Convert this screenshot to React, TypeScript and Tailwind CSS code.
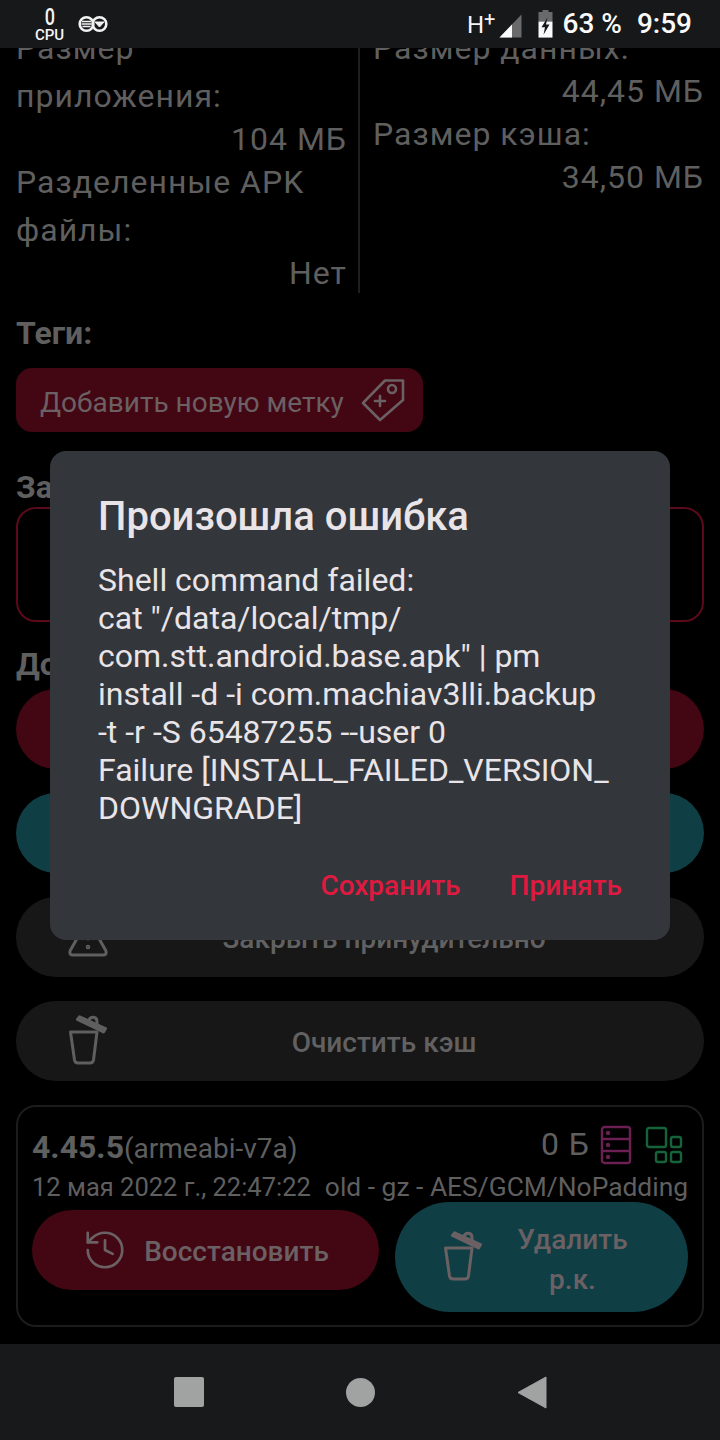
import React from 'react'
import { History } from 'lucide-react'

function TrashIcon({ color }: { color: string }) {
  return (
    <svg width="44" height="52" viewBox="0 0 44 52" fill="none" stroke={color} strokeWidth="3" strokeLinecap="round" strokeLinejoin="round">
      <path d="M4.5 17 L31 17 L27.5 45 Q27 48 24 48 L12 48 Q9 48 8.5 45 Z" />
      <path d="M11.5 4.5 L37.5 17 L39.5 13.5 L13.5 1.8 Z" fill={color} />
      <path d="M22.5 6 Q24 1.5 28.5 2.5 Q31.5 3.5 31 8.5" />
    </svg>
  )
}

function WarnIcon() {
  return (
    <svg width="42" height="42" viewBox="0 0 42 42" fill="none" stroke="#5f5f5f" strokeWidth="3" strokeLinecap="round" strokeLinejoin="round">
      <path d="M21 3 L39 35 Q40 39 36 39 L6 39 Q2 39 3 35 Z" />
      <circle cx="21" cy="31" r="0.8" fill="#5f5f5f" />
      <path d="M21 14 V23" />
    </svg>
  )
}

function OwlIcon() {
  return (
    <svg width="30" height="20" viewBox="0 0 30 20" fill="none" stroke="#f2f2f2">
      <circle cx="8.5" cy="10" r="6.8" strokeWidth="2.6" />
      <circle cx="21.5" cy="10" r="6.8" strokeWidth="2.6" />
      <path d="M4 7.5 H13 M3.5 10 H13.5 M4.5 12.5 H12.5" strokeWidth="1.3" />
      <path d="M17 8 H26 L21.5 13 Z" fill="#f2f2f2" strokeWidth="1" />
    </svg>
  )
}

function StatusIcons() {
  return (
    <div className="flex items-center">
      <span className="text-[24px] leading-none font-normal text-[#f5f5f5] mt-[1px]">H</span>
      <span className="text-[20px] leading-none font-normal text-[#f5f5f5] mb-[10px]">+</span>
      <svg className="ml-[4px] mt-[3px]" width="23" height="24" viewBox="0 0 23 24">
        <path d="M0.5 23.5 L22.5 0.5 V23.5 Z" fill="#6a6a6a" />
        <path d="M0.5 23.5 L13 10.5 V23.5 Z" fill="#fafafa" />
      </svg>
      <svg className="ml-[16px]" width="15" height="28" viewBox="0 0 15 34" preserveAspectRatio="none">
        <path d="M4.5 0 H10.5 V2.5 H14.5 V14 H0.5 V2.5 H4.5 Z" fill="#6a6a6a" />
        <path d="M0.5 14 H14.5 V33.5 H0.5 Z" fill="#fafafa" />
        <path d="M9.5 9 L3.5 21 H7 L5.5 30 L11.5 17.5 H8 Z" fill="#17181a" />
      </svg>
    </div>
  )
}

function ListLine({ children, right }: { children: React.ReactNode; right?: boolean }) {
  return <div className={`-mt-[5px] leading-[48px] ${right ? 'text-right' : ''}`}>{children}</div>
}

function PillButton({ bg, label, icon }: { bg: string; label?: string; icon?: React.ReactNode }) {
  return (
    <div className={`h-[80px] rounded-[40px] flex items-center pl-[50px] pr-[46px] ${bg}`}>
      <div className="w-[44px] flex justify-center">{icon}</div>
      <div className="flex-1 text-center text-[28px] font-medium text-[#616161] mt-[4px]">{label}</div>
    </div>
  )
}

export default function App() {
  return (
    <div className="relative w-[720px] h-[1440px] overflow-hidden flex flex-col bg-black font-['Roboto',sans-serif]">
      {/* status bar */}
      <div className="h-[48px] shrink-0 bg-[#17181a] flex items-center justify-between pl-[35px] pr-[28px] z-10">
        <div className="flex items-center">
          <div className="flex flex-col items-center text-[#f5f5f5]">
            <span className="text-[24px] leading-[22px] font-medium scale-x-75">0</span>
            <span className="text-[15px] leading-[14px] font-medium">CPU</span>
          </div>
          <div className="ml-[14px]">
            <OwlIcon />
          </div>
        </div>
        <div className="flex items-center">
          <StatusIcons />
          <span className="ml-[9px] text-[28px] font-medium text-[#fafafa]">63 %</span>
          <span className="ml-[15px] text-[28px] font-medium text-[#fafafa]">9:59</span>
        </div>
      </div>

      {/* page behind the dialog */}
      <div className="flex-1 overflow-hidden px-[16px]">
        <div className="-mt-[19px] flex text-[32px] tracking-[1px] text-[#5f5f5f]">
          <div className="w-[344px] pr-[11px] border-r-2 border-[#1f1f1f] h-[264px]">
            <ListLine>Размер</ListLine>
            <div className="-mt-[5px] leading-[48px] pt-[5px]">приложения:</div>
            <ListLine right>104 МБ</ListLine>
            <ListLine>Разделенные APK</ListLine>
            <div className="-mt-[5px] leading-[48px] pt-[5px]">файлы:</div>
            <ListLine right>Нет</ListLine>
          </div>
          <div className="flex-1 pl-[13px]">
            <ListLine>Размер данных:</ListLine>
            <ListLine right>44,45 МБ</ListLine>
            <ListLine>Размер кэша:</ListLine>
            <ListLine right>34,50 МБ</ListLine>
          </div>
        </div>

        <div className="mt-[20px] text-[32px] leading-[40px] font-bold text-[#5f5f5f]">Теги:</div>
        <div className="mt-[15px] w-[407px] h-[64px] rounded-[16px] bg-[#430713] flex items-center justify-between pl-[24px] pr-[17px]">
          <span className="text-[28px] text-[#6b6063] mt-[5px]">Добавить новую метку</span>
          <svg width="46" height="44" viewBox="0 0 46 44" fill="none" stroke="#6b6063" strokeWidth="2.6" strokeLinecap="round" strokeLinejoin="round">
            <path d="M3 25 L25 2.5 H43 L43 22 L20 42 Z" />
            <circle cx="32" cy="11" r="4" />
            <path d="M20 18 V28 M15 23 H25" />
          </svg>
        </div>

        <div className="mt-[35px] text-[32px] leading-[40px] font-bold text-[#5f5f5f]">Заметка:</div>
        <div className="h-[115px] rounded-[20px] border-2 border-[#5c0a1b]"></div>

        <div className="mt-[22px] text-[32px] leading-[40px] font-bold text-[#5f5f5f]">Дополнительно:</div>
        <div className="flex flex-col gap-[24px] mt-[5px]">
          <PillButton bg="bg-[#430713]" />
          <PillButton bg="bg-[#0f3e45]" />
          <PillButton bg="bg-[#181718]" label="Закрыть принудительно" icon={<WarnIcon />} />
          <PillButton bg="bg-[#181718]" label="Очистить кэш" icon={<TrashIcon color="#5f5f5f" />} />
        </div>

        {/* backup card */}
        <div className="mt-[24px] h-[222px] rounded-[20px] border-2 border-[#1c1c1c] px-[14px] pt-[17px]">
          <div className="flex items-center justify-between h-[46px]">
            <div className="flex items-baseline text-[#5f5f5f]">
              <span className="text-[32px] font-bold">4.45.5</span>
              <span className="text-[28px]">(armeabi-v7a)</span>
            </div>
            <div className="flex items-center pr-[5px] -mt-[4px]">
              <span className="text-[32px] tracking-[1px] text-[#5f5f5f] mr-[10px] -mt-[3px]">0 Б</span>
              <svg width="32" height="40" viewBox="0 0 32 40" fill="none" stroke="#6b1f52" strokeWidth="2.4" strokeLinejoin="round">
                <rect x="2" y="2" width="28" height="36" rx="2.5" />
                <path d="M2 14 H30 M2 26 H30" />
                <circle cx="8" cy="8" r="1" fill="#6b1f52" />
                <circle cx="8" cy="20" r="1" fill="#6b1f52" />
                <circle cx="8" cy="32" r="1" fill="#6b1f52" />
              </svg>
              <svg className="ml-[13px]" width="38" height="38" viewBox="0 0 38 38" fill="none" stroke="#14633a" strokeWidth="2.4" strokeLinejoin="round">
                <rect x="2" y="2" width="19" height="19" rx="2" />
                <rect x="26" y="11" width="10" height="10" rx="2" />
                <rect x="11" y="26" width="10" height="10" rx="2" />
                <rect x="26" y="26" width="10" height="10" rx="2" />
              </svg>
            </div>
          </div>
          <div className="flex items-baseline gap-[14px] leading-[34px] text-[#5f5f5f] whitespace-nowrap">
            <span className="text-[25.5px]">12 мая 2022 г., 22:47:22</span>
            <span className="text-[26.4px]">old - gz - AES/GCM/NoPadding</span>
          </div>
          <div className="flex items-start gap-[16px] -mt-[2px]">
            <div className="mt-[8px] w-[347px] h-[80px] rounded-[40px] bg-[#430713] flex items-center justify-center gap-[16px]">
              <History size={46} strokeWidth={1.4} color="#6b6063" />
              <span className="text-[28px] font-medium text-[#6b6063] mt-[4px]">Восстановить</span>
            </div>
            <div className="w-[293px] h-[110px] rounded-[55px] bg-[#0f3e45] flex items-center pl-[46px]">
              <TrashIcon color="#6b6063" />
              <div className="flex-1 text-center text-[28px] leading-[40px] font-medium text-[#6b6063] pr-[28px] mt-[6px]">
                Удалить
                <br />
                р.к.
              </div>
            </div>
          </div>
        </div>
      </div>

      {/* nav bar */}
      <div className="h-[96px] shrink-0 bg-[#17191b] flex items-center justify-center gap-[142px]">
        <div className="w-[30px] h-[30px] rounded-[2px] bg-[#a0a3a2]"></div>
        <div className="w-[29px] h-[29px] rounded-full bg-[#a0a3a2]"></div>
        <svg width="30" height="33" viewBox="0 0 30 33">
          <path d="M29 1 V32 L1 16.5 Z" fill="#a0a3a2" stroke="#a0a3a2" strokeWidth="1" strokeLinejoin="round" />
        </svg>
      </div>

      {/* error dialog */}
      <div className="absolute left-[50px] top-[451px] w-[620px] h-[489px] rounded-[16px] bg-[#33363a] pl-[48px] pr-[48px] pt-[42px] flex flex-col z-20">
        <div className="text-[40px] leading-[48px] font-medium text-[#e9e4e8]">Произошла ошибка</div>
        <div className="mt-[20px] text-[32px] leading-[38px] text-[#e9e4e8] whitespace-nowrap">
          <div>Shell command failed:</div>
          <div>cat "/data/local/tmp/</div>
          <div>com.stt.android.base.apk" | pm</div>
          <div>install -d -i com.machiav3lli.backup</div>
          <div>-t -r -S 65487255 --user 0</div>
          <div>Failure [INSTALL_FAILED_VERSION_</div>
          <div>DOWNGRADE]</div>
        </div>
        <div className="mt-[39px] flex justify-end gap-[49px] text-[28px] leading-[40px] font-medium text-[#df1a41]">
          <span>Сохранить</span>
          <span>Принять</span>
        </div>
      </div>
    </div>
  )
}
